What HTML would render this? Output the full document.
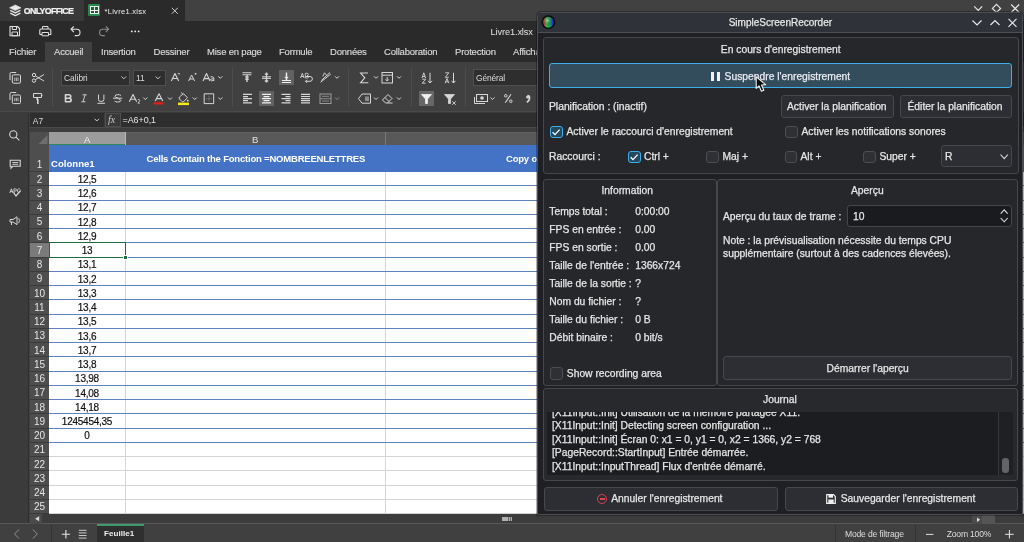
<!DOCTYPE html>
<html><head><meta charset="utf-8">
<style>
*{box-sizing:border-box;margin:0;padding:0}
html,body{width:1024px;height:542px;overflow:hidden}
body{will-change:transform}
body{position:relative;font-family:"Liberation Sans",sans-serif;background:#404040;color:#ddd}
.a{position:absolute}
.t{position:absolute;white-space:nowrap;line-height:1}
svg{position:absolute;overflow:visible}
/* OnlyOffice */
.mt{position:absolute;top:46.9px;font-size:9.5px;letter-spacing:-0.2px;-webkit-text-stroke:0.15px #d9d9d9;color:#d9d9d9;white-space:nowrap;line-height:1}
.row{position:absolute;left:30px;width:994px;height:14.25px}
.rh{position:absolute;left:30px;width:19px;background:#4b4b4b;color:#d8d8d8;font-size:9.5px;text-align:center;border-bottom:1px solid #3a3a3a}
.ca{position:absolute;left:49px;width:76px;text-align:center;font-size:9.4px;color:#000;line-height:14px}
.hl{position:absolute;left:49px;width:975px;height:1px;background:#8eaadb}
.gl{position:absolute;left:49px;width:975px;height:1px;background:#dadada}
/* SSR */
.s{position:absolute;white-space:nowrap;line-height:1;font-size:10.3px;color:#e6e6e6;margin-top:0.8px;-webkit-text-stroke:0.25px #e6e6e6}
.gb{position:absolute;border:1px solid #45474b;border-radius:3px;background:#26272b}
.btn{position:absolute;border:1px solid #45484d;border-radius:3px;background:#2c2e33}
.cb{position:absolute;width:12.5px;height:12.5px;border:1px solid #4c4e53;border-radius:3px;background:#2e3034}
.cbc{position:absolute;width:12.5px;height:12.5px;border:1px solid #3daee9;border-radius:3px;background:#25485c}
</style></head><body>

<!-- ============ ONLYOFFICE ============ -->
<div class="a" style="left:0;top:0;width:1024px;height:21px;background:#414141"></div>
<div class="a" style="left:0;top:0;width:84px;height:21px;background:#393939"></div>
<div class="a" style="left:84px;top:0;width:101px;height:21px;background:#2a2a2a"></div>
<div class="a" style="left:0;top:21px;width:1024px;height:41px;background:#2a2a2a"></div>
<div class="a" style="left:45px;top:42px;width:47px;height:20px;background:#404040"></div>
<div class="a" style="left:0;top:62px;width:1024px;height:49px;background:#404040"></div>
<div class="a" style="left:0;top:110.5px;width:1024px;height:2px;background:#3a3a3a;border-top:1px solid #4a4a4a"></div>

<!-- tab bar content -->
<div class="t" style="left:23.8px;top:6.5px;font-size:8.9px;letter-spacing:-0.7px;font-weight:bold;color:#f2f2f2;-webkit-text-stroke:0.2px #f2f2f2">ONLYOFFICE</div>
<div class="a" style="left:88px;top:4.4px;width:12px;height:11.4px;background:#248a4e;border-radius:1px"></div>
<div class="a" style="left:89.8px;top:6.2px;width:8.9px;height:7.8px;background:#f2f2f2"></div>
<div class="a" style="left:91px;top:7.4px;width:2.8px;height:2.2px;background:#1c5e38"></div><div class="a" style="left:94.8px;top:7.4px;width:2.8px;height:2.2px;background:#1c5e38"></div><div class="a" style="left:91px;top:10.6px;width:2.8px;height:2.2px;background:#1c5e38"></div><div class="a" style="left:94.8px;top:10.6px;width:2.8px;height:2.2px;background:#1c5e38"></div>
<div class="t" style="left:104.5px;top:7.6px;font-size:7.6px;letter-spacing:0.25px;color:#eee">*Livre1.xlsx</div>
<div class="t" style="left:490.5px;top:27.6px;font-size:9.2px;letter-spacing:-0.1px;color:#e0e0e0">Livre1.xlsx</div>

<!-- menu tabs -->
<div class="mt" style="left:9px">Fichier</div>
<div class="mt" style="left:54px">Accueil</div>
<div class="mt" style="left:101px">Insertion</div>
<div class="mt" style="left:153.5px">Dessiner</div>
<div class="mt" style="left:207px">Mise en page</div>
<div class="mt" style="left:279px">Formule</div>
<div class="mt" style="left:330px">Données</div>
<div class="mt" style="left:384px">Collaboration</div>
<div class="mt" style="left:455px">Protection</div>
<div class="mt" style="left:513px">Affichage</div>

<!-- toolbar controls -->
<div class="a" style="left:61px;top:70px;width:69px;height:16px;background:#2e2e2e;border:1px solid #4f4f4f"></div>
<div class="t" style="left:64px;top:74px;font-size:8.4px;color:#ddd">Calibri</div>
<div class="a" style="left:133px;top:70px;width:33px;height:16px;background:#2e2e2e;border:1px solid #4f4f4f"></div>
<div class="t" style="left:136px;top:74px;font-size:8.4px;color:#ddd">11</div>
<div class="a" style="left:473px;top:69px;width:70px;height:17px;background:#2e2e2e;border:1px solid #4f4f4f"></div>
<div class="t" style="left:476px;top:74.3px;font-size:8.4px;letter-spacing:-0.1px;color:#ddd">Général</div>
<div class="a" style="left:279px;top:70px;width:15px;height:15px;background:#626262"></div>
<div class="a" style="left:259px;top:91px;width:15px;height:15px;background:#626262"></div>
<div class="a" style="left:419px;top:90.5px;width:15px;height:15.5px;background:#676767"></div>
<div class="a" style="left:52px;top:67px;width:1px;height:40px;background:#4c4c4c"></div>
<div class="a" style="left:232px;top:67px;width:1px;height:40px;background:#4c4c4c"></div>
<div class="a" style="left:348px;top:67px;width:1px;height:40px;background:#4c4c4c"></div>
<div class="a" style="left:411px;top:67px;width:1px;height:40px;background:#4c4c4c"></div>
<div class="a" style="left:465px;top:67px;width:1px;height:40px;background:#4c4c4c"></div>

<!-- left sidebar -->
<div class="a" style="left:0;top:113px;width:29px;height:411px;background:#3b3b3b;border-right:1px solid #2f2f2f"></div>

<!-- formula bar -->
<div class="a" style="left:30px;top:112.5px;width:994px;height:19.5px;background:#3e3e3e"></div>
<div class="a" style="left:30px;top:126.5px;width:994px;height:1px;background:#4a4a4a"></div>
<div class="a" style="left:30px;top:113px;width:74px;height:14px;background:#2e2e2e"></div>
<div class="t" style="left:32.8px;top:116.9px;font-size:8.4px;color:#ddd">A7</div>
<div class="a" style="left:104.5px;top:113px;width:16px;height:14px;background:#393939;border:1px solid #4d4d4d"></div>
<div class="t" style="left:108px;top:115px;font-size:10px;font-family:'Liberation Serif';font-style:italic;color:#ccc">fx</div>
<div class="a" style="left:121px;top:113px;width:903px;height:14px;background:#2e2e2e"></div>
<div class="t" style="left:122.5px;top:116px;font-size:8.9px;color:#e6e6e6">=A6+0,1</div>

<!-- column headers -->
<div class="a" style="left:30px;top:131.5px;width:994px;height:13.5px;background:#595959;border-top:1px solid #626262"></div>
<div class="a" style="left:30px;top:132px;width:19px;height:13px;background:#4e4e4e"></div>
<svg style="left:30px;top:132px" width="19" height="13"><path d="M17.5 3 V12 H8.5 Z" fill="#6e6e6e"/></svg>
<div class="a" style="left:49px;top:132px;width:76px;height:13px;background:#9c9c9c;border-bottom:1px solid #2f8a52"></div>
<div class="t" style="left:84px;top:135px;font-size:9.5px;color:#f0f0f0">A</div>
<div class="a" style="left:125px;top:132px;width:1px;height:13px;background:#b8b8b8"></div>
<div class="t" style="left:252px;top:135px;font-size:9.5px;color:#e0e0e0">B</div>
<div class="a" style="left:384.5px;top:132px;width:1px;height:13px;background:#7a7a7a"></div>

<!-- grid -->
<div class="a" style="left:49px;top:145px;width:975px;height:368.5px;background:#fff"></div>
<div class="a" style="left:49px;top:145px;width:975px;height:26.5px;background:#4472c4"></div>
<div class="t" style="left:51px;top:159px;font-size:9.6px;font-weight:bold;color:#fff">Colonne1</div>
<div class="t" style="left:146.5px;top:154.2px;font-size:9.5px;letter-spacing:-0.2px;font-weight:bold;color:#fff">Cells Contain the Fonction =NOMBREENLETTRES</div>
<div class="t" style="left:506px;top:154.2px;font-size:9.5px;letter-spacing:-0.2px;font-weight:bold;color:#fff">Copy o</div>
<!--GRID-->
<div class="a" style="left:30px;top:145px;width:19px;height:368.5px;background:#4e4e4e"></div>
<div class="t" style="left:30px;top:159.8px;width:19px;text-align:center;font-size:10px;color:#e2e2e2">1</div>
<div class="a" style="left:30px;top:171px;width:19px;height:1px;background:#3a3a3a"></div>
<div class="a" style="left:124.5px;top:171.5px;width:1px;height:342px;background:#d4d4d4"></div>
<div class="a" style="left:384.5px;top:171.5px;width:1px;height:342px;background:#d4d4d4"></div>
<div class="t" style="left:30px;top:174.60px;width:19px;text-align:center;font-size:10px;color:#e6e6e6">2</div>
<div class="a" style="left:30px;top:185.25px;width:19px;height:1px;background:#3a3a3a"></div>
<div class="a" style="left:49px;top:185.25px;width:975px;height:1px;background:#5f82c0"></div>
<div class="t" style="left:49px;top:174.90px;width:76px;text-align:center;font-size:10px;letter-spacing:-0.25px;color:#111;-webkit-text-stroke:0.2px #111">12,5</div>
<div class="t" style="left:30px;top:188.85px;width:19px;text-align:center;font-size:10px;color:#e6e6e6">3</div>
<div class="a" style="left:30px;top:199.50px;width:19px;height:1px;background:#3a3a3a"></div>
<div class="a" style="left:49px;top:199.50px;width:975px;height:1px;background:#5f82c0"></div>
<div class="t" style="left:49px;top:189.15px;width:76px;text-align:center;font-size:10px;letter-spacing:-0.25px;color:#111;-webkit-text-stroke:0.2px #111">12,6</div>
<div class="t" style="left:30px;top:203.10px;width:19px;text-align:center;font-size:10px;color:#e6e6e6">4</div>
<div class="a" style="left:30px;top:213.75px;width:19px;height:1px;background:#3a3a3a"></div>
<div class="a" style="left:49px;top:213.75px;width:975px;height:1px;background:#5f82c0"></div>
<div class="t" style="left:49px;top:203.40px;width:76px;text-align:center;font-size:10px;letter-spacing:-0.25px;color:#111;-webkit-text-stroke:0.2px #111">12,7</div>
<div class="t" style="left:30px;top:217.35px;width:19px;text-align:center;font-size:10px;color:#e6e6e6">5</div>
<div class="a" style="left:30px;top:228.00px;width:19px;height:1px;background:#3a3a3a"></div>
<div class="a" style="left:49px;top:228.00px;width:975px;height:1px;background:#5f82c0"></div>
<div class="t" style="left:49px;top:217.65px;width:76px;text-align:center;font-size:10px;letter-spacing:-0.25px;color:#111;-webkit-text-stroke:0.2px #111">12,8</div>
<div class="t" style="left:30px;top:231.60px;width:19px;text-align:center;font-size:10px;color:#e6e6e6">6</div>
<div class="a" style="left:30px;top:242.25px;width:19px;height:1px;background:#3a3a3a"></div>
<div class="a" style="left:49px;top:242.25px;width:975px;height:1px;background:#5f82c0"></div>
<div class="t" style="left:49px;top:231.90px;width:76px;text-align:center;font-size:10px;letter-spacing:-0.25px;color:#111;-webkit-text-stroke:0.2px #111">12,9</div>
<div class="a" style="left:30px;top:242.75px;width:19px;height:14.25px;background:#7b7b7b"></div>
<div class="t" style="left:30px;top:245.85px;width:19px;text-align:center;font-size:10px;color:#e6e6e6">7</div>
<div class="a" style="left:30px;top:256.50px;width:19px;height:1px;background:#3a3a3a"></div>
<div class="a" style="left:49px;top:256.50px;width:975px;height:1px;background:#5f82c0"></div>
<div class="t" style="left:49px;top:246.15px;width:76px;text-align:center;font-size:10px;letter-spacing:-0.25px;color:#111;-webkit-text-stroke:0.2px #111">13</div>
<div class="t" style="left:30px;top:260.10px;width:19px;text-align:center;font-size:10px;color:#e6e6e6">8</div>
<div class="a" style="left:30px;top:270.75px;width:19px;height:1px;background:#3a3a3a"></div>
<div class="a" style="left:49px;top:270.75px;width:975px;height:1px;background:#5f82c0"></div>
<div class="t" style="left:49px;top:260.40px;width:76px;text-align:center;font-size:10px;letter-spacing:-0.25px;color:#111;-webkit-text-stroke:0.2px #111">13,1</div>
<div class="t" style="left:30px;top:274.35px;width:19px;text-align:center;font-size:10px;color:#e6e6e6">9</div>
<div class="a" style="left:30px;top:285.00px;width:19px;height:1px;background:#3a3a3a"></div>
<div class="a" style="left:49px;top:285.00px;width:975px;height:1px;background:#5f82c0"></div>
<div class="t" style="left:49px;top:274.65px;width:76px;text-align:center;font-size:10px;letter-spacing:-0.25px;color:#111;-webkit-text-stroke:0.2px #111">13,2</div>
<div class="t" style="left:30px;top:288.60px;width:19px;text-align:center;font-size:10px;color:#e6e6e6">10</div>
<div class="a" style="left:30px;top:299.25px;width:19px;height:1px;background:#3a3a3a"></div>
<div class="a" style="left:49px;top:299.25px;width:975px;height:1px;background:#5f82c0"></div>
<div class="t" style="left:49px;top:288.90px;width:76px;text-align:center;font-size:10px;letter-spacing:-0.25px;color:#111;-webkit-text-stroke:0.2px #111">13,3</div>
<div class="t" style="left:30px;top:302.85px;width:19px;text-align:center;font-size:10px;color:#e6e6e6">11</div>
<div class="a" style="left:30px;top:313.50px;width:19px;height:1px;background:#3a3a3a"></div>
<div class="a" style="left:49px;top:313.50px;width:975px;height:1px;background:#5f82c0"></div>
<div class="t" style="left:49px;top:303.15px;width:76px;text-align:center;font-size:10px;letter-spacing:-0.25px;color:#111;-webkit-text-stroke:0.2px #111">13,4</div>
<div class="t" style="left:30px;top:317.10px;width:19px;text-align:center;font-size:10px;color:#e6e6e6">12</div>
<div class="a" style="left:30px;top:327.75px;width:19px;height:1px;background:#3a3a3a"></div>
<div class="a" style="left:49px;top:327.75px;width:975px;height:1px;background:#5f82c0"></div>
<div class="t" style="left:49px;top:317.40px;width:76px;text-align:center;font-size:10px;letter-spacing:-0.25px;color:#111;-webkit-text-stroke:0.2px #111">13,5</div>
<div class="t" style="left:30px;top:331.35px;width:19px;text-align:center;font-size:10px;color:#e6e6e6">13</div>
<div class="a" style="left:30px;top:342.00px;width:19px;height:1px;background:#3a3a3a"></div>
<div class="a" style="left:49px;top:342.00px;width:975px;height:1px;background:#5f82c0"></div>
<div class="t" style="left:49px;top:331.65px;width:76px;text-align:center;font-size:10px;letter-spacing:-0.25px;color:#111;-webkit-text-stroke:0.2px #111">13,6</div>
<div class="t" style="left:30px;top:345.60px;width:19px;text-align:center;font-size:10px;color:#e6e6e6">14</div>
<div class="a" style="left:30px;top:356.25px;width:19px;height:1px;background:#3a3a3a"></div>
<div class="a" style="left:49px;top:356.25px;width:975px;height:1px;background:#5f82c0"></div>
<div class="t" style="left:49px;top:345.90px;width:76px;text-align:center;font-size:10px;letter-spacing:-0.25px;color:#111;-webkit-text-stroke:0.2px #111">13,7</div>
<div class="t" style="left:30px;top:359.85px;width:19px;text-align:center;font-size:10px;color:#e6e6e6">15</div>
<div class="a" style="left:30px;top:370.50px;width:19px;height:1px;background:#3a3a3a"></div>
<div class="a" style="left:49px;top:370.50px;width:975px;height:1px;background:#5f82c0"></div>
<div class="t" style="left:49px;top:360.15px;width:76px;text-align:center;font-size:10px;letter-spacing:-0.25px;color:#111;-webkit-text-stroke:0.2px #111">13,8</div>
<div class="t" style="left:30px;top:374.10px;width:19px;text-align:center;font-size:10px;color:#e6e6e6">16</div>
<div class="a" style="left:30px;top:384.75px;width:19px;height:1px;background:#3a3a3a"></div>
<div class="a" style="left:49px;top:384.75px;width:975px;height:1px;background:#5f82c0"></div>
<div class="t" style="left:49px;top:374.40px;width:76px;text-align:center;font-size:10px;letter-spacing:-0.25px;color:#111;-webkit-text-stroke:0.2px #111">13,98</div>
<div class="t" style="left:30px;top:388.35px;width:19px;text-align:center;font-size:10px;color:#e6e6e6">17</div>
<div class="a" style="left:30px;top:399.00px;width:19px;height:1px;background:#3a3a3a"></div>
<div class="a" style="left:49px;top:399.00px;width:975px;height:1px;background:#5f82c0"></div>
<div class="t" style="left:49px;top:388.65px;width:76px;text-align:center;font-size:10px;letter-spacing:-0.25px;color:#111;-webkit-text-stroke:0.2px #111">14,08</div>
<div class="t" style="left:30px;top:402.60px;width:19px;text-align:center;font-size:10px;color:#e6e6e6">18</div>
<div class="a" style="left:30px;top:413.25px;width:19px;height:1px;background:#3a3a3a"></div>
<div class="a" style="left:49px;top:413.25px;width:975px;height:1px;background:#5f82c0"></div>
<div class="t" style="left:49px;top:402.90px;width:76px;text-align:center;font-size:10px;letter-spacing:-0.25px;color:#111;-webkit-text-stroke:0.2px #111">14,18</div>
<div class="t" style="left:30px;top:416.85px;width:19px;text-align:center;font-size:10px;color:#e6e6e6">19</div>
<div class="a" style="left:30px;top:427.50px;width:19px;height:1px;background:#3a3a3a"></div>
<div class="a" style="left:49px;top:427.50px;width:975px;height:1px;background:#5f82c0"></div>
<div class="t" style="left:49px;top:417.15px;width:76px;text-align:center;font-size:10px;letter-spacing:-0.25px;color:#111;-webkit-text-stroke:0.2px #111">1245454,35</div>
<div class="t" style="left:30px;top:431.10px;width:19px;text-align:center;font-size:10px;color:#e6e6e6">20</div>
<div class="a" style="left:30px;top:441.75px;width:19px;height:1px;background:#3a3a3a"></div>
<div class="a" style="left:49px;top:441.75px;width:975px;height:1px;background:#5f82c0"></div>
<div class="t" style="left:49px;top:431.40px;width:76px;text-align:center;font-size:10px;letter-spacing:-0.25px;color:#111;-webkit-text-stroke:0.2px #111">0</div>
<div class="t" style="left:30px;top:445.35px;width:19px;text-align:center;font-size:10px;color:#e6e6e6">21</div>
<div class="a" style="left:30px;top:456.00px;width:19px;height:1px;background:#3a3a3a"></div>
<div class="a" style="left:49px;top:456.00px;width:975px;height:1px;background:#d4d4d4"></div>
<div class="t" style="left:30px;top:459.60px;width:19px;text-align:center;font-size:10px;color:#e6e6e6">22</div>
<div class="a" style="left:30px;top:470.25px;width:19px;height:1px;background:#3a3a3a"></div>
<div class="a" style="left:49px;top:470.25px;width:975px;height:1px;background:#d4d4d4"></div>
<div class="t" style="left:30px;top:473.85px;width:19px;text-align:center;font-size:10px;color:#e6e6e6">23</div>
<div class="a" style="left:30px;top:484.50px;width:19px;height:1px;background:#3a3a3a"></div>
<div class="a" style="left:49px;top:484.50px;width:975px;height:1px;background:#d4d4d4"></div>
<div class="t" style="left:30px;top:488.10px;width:19px;text-align:center;font-size:10px;color:#e6e6e6">24</div>
<div class="a" style="left:30px;top:498.75px;width:19px;height:1px;background:#3a3a3a"></div>
<div class="a" style="left:49px;top:498.75px;width:975px;height:1px;background:#d4d4d4"></div>
<div class="t" style="left:30px;top:502.35px;width:19px;text-align:center;font-size:10px;color:#e6e6e6">25</div>
<div class="a" style="left:30px;top:513.00px;width:19px;height:1px;background:#3a3a3a"></div>
<div class="a" style="left:49px;top:513.00px;width:975px;height:1px;background:#d4d4d4"></div>
<div class="a" style="left:48.5px;top:242px;width:77.5px;height:16px;border:1.7px solid #1f6b42"></div>
<div class="a" style="left:122.5px;top:254.5px;width:5.5px;height:5.5px;background:#1f6b42;border:1px solid #fff"></div>
<!--/GRID-->

<!-- scrollbar / status -->
<div class="a" style="left:30px;top:513.5px;width:994px;height:10.5px;background:#3c3c3c"></div>
<div class="a" style="left:0;top:523px;width:1024px;height:19px;background:#404040;border-top:1px solid #585858"></div>
<div class="a" style="left:501.6px;top:516.7px;width:10.6px;height:4px;background:repeating-linear-gradient(90deg,#b0b0b0 0,#b0b0b0 1.6px,#6a6a6a 1.6px,#6a6a6a 2.2px)"></div>
<div class="a" style="left:96.5px;top:524px;width:47px;height:18px;background:#2f2f2f;border-top:2px solid #3e9a6a"></div>
<div class="t" style="left:104px;top:530px;font-size:8.1px;font-weight:bold;color:#eee">Feuille1</div>
<div class="a" style="left:51px;top:525px;width:1px;height:17px;background:#333"></div>
<div class="a" style="left:30px;top:514px;width:12px;height:9.5px;background:#4b4b4b"></div>
<svg style="left:0;top:508px" width="100" height="34" viewBox="0 0 100 34">
 <path d="M39.2 8.2 V13.3 L35 10.75 Z" fill="#d8d8d8"/>
 <path d="M19 21.5 L14.5 26 L19 30.5 M32.8 21.5 L37.3 26 L32.8 30.5" stroke="#9a9a9a" stroke-width="0.9" fill="none"/>
 <path d="M61.8 26.2 H70 M65.9 22 V30.5" stroke="#e8e8e8" stroke-width="1.1" fill="none"/>
 <path d="M78.8 22.3 H86.5 M78.8 24.9 H86.5 M78.8 27.5 H86.5 M78.8 30.1 H86.5" stroke="#d8d8d8" stroke-width="0.9" fill="none"/>
</svg>
<div class="a" style="left:835px;top:525px;width:1px;height:17px;background:#333"></div>
<div class="a" style="left:915px;top:525px;width:1px;height:17px;background:#333"></div>
<div class="t" style="left:844.9px;top:529.7px;font-size:8.6px;letter-spacing:-0.17px;color:#ddd">Mode de filtrage</div>
<div class="t" style="left:946.7px;top:529.7px;font-size:8.6px;letter-spacing:-0.2px;color:#ddd">Zoom 100%</div>
<div class="a" style="left:971.8px;top:515px;width:10px;height:9px;background:#4a4a4a"></div>
<div class="a" style="left:982px;top:515px;width:13px;height:9px;background:#555"></div>
<svg style="left:900px;top:508px" width="124" height="34" viewBox="0 0 124 34">
 <path d="M77 9.5 V14 L80.2 11.75 Z" fill="#ddd"/>
 <path d="M26 26.4 H33.4" stroke="#e0e0e0" stroke-width="1" fill="none"/>
 <path d="M105.2 26.3 H113.6 M109.4 22 V30.5" stroke="#e8e8e8" stroke-width="1" fill="none"/>
</svg>
<!-- sidebar icons -->
<svg style="left:0;top:120px" width="30" height="120" viewBox="0 120 30 120">
 <g fill="none" stroke="#d8d8d8" stroke-width="1.1">
  <circle cx="13.3" cy="134.4" r="3.6"/>
  <path d="M15.9 137.1 L19.4 140.4"/>
  <path d="M10.2 160.2 H20.2 V166.3 H12.8 L11 168.2 V166.3 H10.2 Z"/>
  <path d="M12.3 162.5 H18.2 M12.3 164.3 H18.2" stroke-width="0.9"/>
  <path d="M9.8 193 L11.4 188.8 L13 193 M10.4 191.6 H12.4" stroke-width="0.9"/>
  <path d="M14 188.8 H15.3 Q16.5 188.8 16.5 190 Q16.5 191 15.3 191 H14 Z M14 191 V193" stroke-width="0.8"/>
  <path d="M20.3 189.5 Q19.6 188.7 18.7 188.8 Q17.2 189 17.4 191 Q17.6 192.8 19.5 192.5" stroke-width="0.8"/>
  <path d="M13.6 192.7 L16 196 L20.6 190.5" stroke-width="1.2"/>
  <path d="M10 219.5 H13 L17 216.8 V224.6 L13 222 H10 Z M11.5 222 V225" stroke-width="1"/>
  <path d="M18.7 218.2 Q20.3 220.7 18.7 223.2" stroke-width="0.9"/>
 </g>
</svg>

<!--OOICONS-->
<svg style="left:0;top:0" width="1024" height="542" viewBox="0 0 1024 542">
<g fill="none" stroke="#d6d6d6" stroke-width="1" stroke-linejoin="round">
 <!-- logo layers -->
 <path d="M15.3 5 L21 7.8 L15.3 10.6 L9.6 7.8 Z" fill="#e8e8e8" stroke="#e8e8e8" stroke-width="0.6"/>
 <path d="M10.2 10.4 L15.3 12.9 L20.4 10.4" stroke="#e8e8e8" stroke-width="1.3"/>
 <path d="M10.2 13.2 L15.3 15.7 L20.4 13.2" stroke="#e8e8e8" stroke-width="1.3"/>
 <!-- tab icon grid -->
 <!-- tab close -->
 <path d="M171.8 7.8 L177.8 13.8 M177.8 7.8 L171.8 13.8" stroke="#e0e0e0" stroke-width="0.9"/>
 <!-- save -->
 <path d="M10 26.5 H17.5 L19.5 28.5 V35.8 H10 Z" stroke="#e0e0e0" stroke-width="1.1"/>
 <path d="M12.3 26.5 V29.5 H16.5 V26.5" stroke="#e0e0e0"/>
 <path d="M12 32 H17.5 V35.8 H12 Z" stroke="#e0e0e0"/>
 <!-- print -->
 <path d="M42.5 29 V26.5 H48 V29" stroke="#e0e0e0"/>
 <path d="M39.8 34.5 V30.3 Q39.8 29 41 29 H49.5 Q50.8 29 50.8 30.3 V34.5 H48.5" stroke="#e0e0e0" stroke-width="1.1"/>
 <path d="M42 32.5 H48.5 V35.8 H42 Z M42 34.5 H39.8" stroke="#e0e0e0"/>
 <!-- undo -->
 <path d="M73.8 26.5 L71 29.2 L73.8 32 M71 29.2 H77 Q80 29.2 80 32.4 Q80 35.6 77 35.6 H74.8" stroke="#e0e0e0" stroke-width="1.1"/>
 <!-- redo -->
 <path d="M105.8 26.5 L108.6 29.2 L105.8 32 M108.6 29.2 H102.6 Q99.6 29.2 99.6 32.4 Q99.6 35.6 102.6 35.6 H104.8" stroke="#8a8a8a" stroke-width="1.1"/>
 <!-- more dots -->
 <circle cx="131.8" cy="31.4" r="0.9" fill="#eee" stroke="none"/><circle cx="135.2" cy="31.4" r="0.9" fill="#eee" stroke="none"/><circle cx="138.6" cy="31.4" r="0.9" fill="#eee" stroke="none"/>

 <!-- copy -->
 <path d="M10 80 V73.8 Q10 72.5 11.3 72.5 H16.2" />
 <rect x="12.3" y="74.8" width="8.2" height="8.4" rx="1.2"/>
 <path d="M14.8 77.5 V81 M16.4 77.5 V81 M18 77.5 V81" stroke-width="0.8"/>
 <!-- scissors -->
 <circle cx="34" cy="75" r="1.7"/><circle cx="34" cy="80.6" r="1.7"/>
 <path d="M35.5 76 L44 81 M35.5 79.6 L44 74.5"/>
 <!-- paste -->
 <path d="M10 100 V93.8 Q10 92.5 11.3 92.5 H16.2"/>
 <rect x="12.3" y="95" width="8.2" height="8.6" rx="1.2"/>
 <path d="M14.8 97.8 V101.2 M16.4 97.8 V101.2 M18 97.8 V101.2" stroke-width="0.8"/>
 <!-- format painter -->
 <path d="M33.5 93.5 H41.5 V97.5 H33.5 Z M41.5 95.5 H42.5" />
 <path d="M37.2 97.5 V99.5 H37.8 V104" stroke-width="1.6"/>
 <!-- font combos chevrons -->
 <path d="M121.5 76.5 L123.8 78.8 L126.1 76.5 M155.6 76.5 L157.9 78.8 L160.2 76.5" stroke="#d0d0d0"/>
 <!-- A increase / decrease / Aa -->
 <path d="M171.3 81 L175 73.5 L178.7 81 M172.6 78.5 H177.4" stroke-width="1.1"/>
 <path d="M177.8 73.8 H180" stroke-width="1"/>
 <path d="M188.6 81 L191.6 75 L194.6 81 M189.7 79 H193.5" stroke-width="1"/>
 <path d="M194.7 73.8 H196.5 M195.6 72.9 V74.7" stroke-width="0.9"/>
 <path d="M203 81 L206.5 73.5 L210 81 M204.2 78.6 H208.8" stroke-width="1.1"/>
 <path d="M210.5 76.8 Q213.8 76.3 213.8 78.3 V81 M213.8 78.8 Q210.5 78.5 210.5 80 Q210.8 81.3 213.8 80.4" stroke-width="1"/>
 <path d="M218.3 76.3 L220.3 78.3 L222.3 76.3" />
 <!-- B I U S -->
 <path d="M65.5 94.8 H68.6 Q70.8 94.8 70.8 96.6 Q70.8 98 69 98.2 Q71.2 98.4 71.2 100 Q71.2 101.8 68.8 101.8 H65.5 Z M65.5 98.2 H69" stroke-width="1.6"/>
 <path d="M82.5 94.8 H86.8 M81.3 101.8 H85.5 M85 94.8 L83 101.8" stroke-width="0.9"/>
 <path d="M98.5 94.6 V99.5 Q98.5 101.5 101.2 101.5 Q103.9 101.5 103.9 99.5 V94.6 M97.4 103.3 H105" stroke-width="1"/>
 <path d="M121 95.5 Q119.8 94.6 117.8 94.6 Q115 94.6 115 96.3 Q115 97.6 118 98 M113 98.2 H122.2 M118.5 99 Q120.8 99.4 120.8 100.5 Q120.8 102 117.8 102 Q115.6 102 114.6 101" stroke-width="1"/>
 <!-- A subscript -->
 <path d="M129.3 101.8 L133 94.5 L136.7 101.8 M130.6 99.3 H135.4" stroke-width="1.1"/>
 <path d="M137.8 99.5 Q139.8 99 139.8 100.8 L137.8 103.2 H140" stroke-width="0.8"/>
 <path d="M143.3 97.5 L145.3 99.5 L147.3 97.5"/>
 <!-- font color A -->
 <path d="M155.2 101 L159 93.8 L162.8 101 M156.5 98.6 H161.5" stroke-width="1.1"/>
 <path d="M168 97.5 L170 99.5 L172 97.5"/>
 <!-- fill -->
 <path d="M179.5 97 L183.3 93.5 L187.5 97.8 L183.8 101.4 Q182.8 102.3 181.8 101.4 L179.5 99 Q178.6 98 179.5 97 Z M181.2 92.6 L183.3 94.7" stroke-width="1"/>
 <circle cx="187.8" cy="100.6" r="0.9" fill="#e0e0e0" stroke="none"/>
 <path d="M192.8 97.5 L194.8 99.5 L196.8 97.5"/>
 <!-- borders -->
 <rect x="204.2" y="93.8" width="9.5" height="9.8" stroke-width="1"/>
 <path d="M206.2 98.7 H211.7 M209 95.8 V101.6" stroke="#8a8a8a" stroke-width="0.8" stroke-dasharray="1 0.6"/>
 <path d="M218.3 97.5 L220.3 99.5 L222.3 97.5"/>
 <path d="M94.6 118.8 L96.8 121 L99 118.8" stroke="#d0d0d0"/>
</g>
<!-- colored bars -->
<rect x="153.7" y="102.2" width="9.8" height="2.3" fill="#e0201c"/>
<rect x="178" y="102.6" width="11" height="2.5" fill="#f5e71a"/>
<g fill="none" stroke="#d6d6d6" stroke-width="1">
 <!-- align top -->
 <path d="M242.5 72.8 H251.5 M242.5 74.8 H251.5" stroke-width="1.1"/>
 <path d="M247 74.8 V82 M245.3 77 H248.7 M245.3 79.3 H248.7" stroke-width="1.4"/>
 <!-- align middle -->
 <path d="M262 76.8 H271 M262 78.4 H271" stroke-width="1"/>
 <path d="M266.5 72.6 V82.5 M264.8 74.2 H268.2 M264.8 81 H268.2" stroke-width="1.3"/>
 <!-- align bottom (active) -->
 <path d="M282 80.5 H291 M282 82.5 H291" stroke="#f0f0f0" stroke-width="1.1"/>
 <path d="M286.5 72.5 V80.5 M284.8 77.5 H288.2" stroke="#f0f0f0" stroke-width="1.4"/>
 <!-- wrap -->
 <path d="M300.5 78 L302.3 73.3 L304.1 78 M301.1 76.5 H303.5" stroke-width="0.9"/>
 <path d="M305.3 73.3 H307 Q308.4 73.3 308.4 74.6 Q308.4 75.6 307 75.7 Q308.6 75.8 308.6 76.9 Q308.6 78 307 78 H305.3 Z" stroke-width="0.8"/>
 <path d="M305.5 76.5 H310 Q312.4 76.5 312.4 78.9 Q312.4 81.3 310 81.3 H305.5 M307 79.8 L305.5 81.3 L307 82.8" stroke-width="1"/>
 <!-- orientation -->
 <path d="M321.3 80.5 L330 72.5 M320.5 82.3 L330.8 74" stroke-width="1"/>
 <path d="M322.8 76.5 L324.5 72.8 L326.8 75.5" stroke-width="0.9"/>
 <path d="M335 76.3 L337 78.3 L339 76.3"/>
 <!-- align left/center/right/justify -->
 <path d="M243 94.3 H252 M243 96.7 H248 M243 98.6 H252 M243 100.6 H248 M243 102.8 H252" stroke-width="1.2"/>
 <path d="M262 94.3 H271 M263.5 96.7 H269.5 M262 98.6 H271 M263.5 100.6 H269.5 M262 102.8 H271" stroke="#f0f0f0" stroke-width="1.2"/>
 <path d="M281.5 94.3 H290.5 M285.5 96.7 H290.5 M281.5 98.6 H290.5 M285.5 100.6 H290.5 M281.5 102.8 H290.5" stroke-width="1.2"/>
 <path d="M301 94.3 H310 M301 96.5 H310 M301 98.6 H310 M301 100.7 H310 M301 102.8 H310" stroke-width="1.2"/>
 <!-- merge -->
 <rect x="320" y="94" width="11" height="9.5" stroke="#9a9a9a" stroke-width="1"/>
 <path d="M320 98.7 H331 M322 96.3 H329 M322 101 H329" stroke="#9a9a9a" stroke-width="0.8"/>
 <path d="M335 97.5 L337 99.5 L339 97.5" stroke="#8a8a8a"/>
 <!-- sum -->
 <path d="M368 73 H360.6 L364.8 77.8 L360.6 82.8 H368.3" stroke-width="1.1"/>
 <path d="M374 76.3 L376 78.3 L378 76.3"/>
 <!-- insert cells -->
 <rect x="382" y="72.5" width="10.5" height="10.5" stroke-width="1"/>
 <path d="M382 75.2 H392.5 M387.2 77 V81 M385.6 79.4 L387.2 81 L388.8 79.4" stroke-width="1"/>
 <path d="M397 76.3 L399 78.3 L401 76.3"/>
 <!-- named range tag -->
 <path d="M362 94 H370.5 V103.2 H362 L358.5 98.6 Z" stroke-width="1"/>
 <path d="M366 96.5 V101 M368 96.5 V101" stroke-width="1"/>
 <path d="M374 97.5 L376 99.5 L378 97.5"/>
 <!-- eraser -->
 <path d="M382.5 100 L388 94.5 L392 98.5 L387.5 103 H385.5 Z M385 97.5 L389 101.5 M387.5 103 H392.5" stroke-width="1"/>
 <path d="M397 97.5 L399 99.5 L401 97.5"/>
 <!-- sort az -->
 <path d="M422 78 L423.8 72.8 L425.6 78 M422.6 76.5 H425" stroke-width="0.9"/>
 <path d="M422.2 79.2 H425.6 L422.2 83.2 H425.6" stroke-width="0.9"/>
 <path d="M430 72.8 V83 M428 80.8 L430 83 L432 80.8" stroke-width="1"/>
 <!-- sort za -->
 <path d="M445.3 72.8 H448.8 L445.3 77.3 H448.8" stroke-width="0.9"/>
 <path d="M445.2 83.2 L447 78.5 L448.8 83.2 M445.8 81.8 H448.2" stroke-width="0.9"/>
 <path d="M453.5 72.8 V83 M451.5 80.8 L453.5 83 L455.5 80.8" stroke-width="1"/>
 <!-- filter -->
 <path d="M421.5 94.5 H431.5 L427.5 99 V103.5 H425.5 V99 Z" fill="#f0f0f0" stroke="#f0f0f0" stroke-width="0.8"/>
 <path d="M444.5 94.5 H454.5 L450.5 99 V103.5 H448.5 V99 Z" fill="#d6d6d6" stroke="#d6d6d6" stroke-width="0.8"/>
 <path d="M452.3 101.3 L455.8 104.8 M455.8 101.3 L452.3 104.8" stroke-width="0.9"/>
 <!-- currency -->
 <path d="M474.5 97 V103.5 H485" stroke-width="1"/>
 <rect x="476.5" y="94.5" width="11" height="7" stroke-width="1"/>
 <circle cx="482" cy="98" r="1.8" fill="#d6d6d6" stroke="none"/>
 <path d="M490.5 97.5 L492.5 99.5 L494.5 97.5"/>
 <!-- percent -->
 <circle cx="505.8" cy="95.8" r="1.3" stroke-width="1"/><circle cx="510.8" cy="101.2" r="1.3" stroke-width="1"/>
 <path d="M511 94.3 L505.3 102.8" stroke-width="1.1"/>
 <path d="M527.5 95.5 Q529.6 95.5 529.6 97.6 Q529.6 100.8 526.8 102.3" stroke-width="1.6"/>
 <circle cx="527.6" cy="97" r="1.5" fill="#d6d6d6" stroke="none"/>
</g>
</svg>
<!--/OOICONS-->

<svg style="left:960px;top:0" width="64" height="16" viewBox="960 0 64 16">
 <path d="M974.2 6.3 L978.2 10.3 L982.2 6.3" stroke="#e8e8e8" stroke-width="1.2" fill="none"/>
 <path d="M996.5 4.3 L1000.6 8.4 L996.5 12.5 L992.4 8.4 Z" stroke="#e8e8e8" stroke-width="1.2" fill="none"/>
 <path d="M1011.2 4.5 L1019.2 12.5 M1019.2 4.5 L1011.2 12.5" stroke="#e8e8e8" stroke-width="1.2" fill="none"/>
</svg>
<!-- ============ SSR WINDOW ============ -->
<div class="a" style="left:536.8px;top:11.8px;width:486.7px;height:503.7px;background:#1f2023;border:1px solid #4b4d52;border-radius:4px 4px 0 0;box-shadow:0 0 0 1px rgba(0,0,0,0.3)"></div>
<div class="a" style="left:537.8px;top:12.8px;width:484.7px;height:20.7px;background:#2f3238;border-radius:3px 3px 0 0;border-bottom:1px solid #4d4f54"></div>
<div class="s" style="left:728.7px;top:17.5px;font-size:10px">SimpleScreenRecorder</div>


<!-- window controls -->
<svg style="left:970px;top:17px" width="60" height="12" viewBox="0 0 60 12">
 <path d="M2.5 3.5 L7 8 L11.5 3.5" stroke="#e8e8e8" stroke-width="1.2" fill="none"/>
 <path d="M20.5 8 L25 3.5 L29.5 8" stroke="#e8e8e8" stroke-width="1.2" fill="none"/>
 <path d="M38.5 1.8 L46.5 9.8 M46.5 1.8 L38.5 9.8" stroke="#e8e8e8" stroke-width="1.2" fill="none"/>
</svg>
<!-- app icon -->
<svg style="left:541px;top:15px" width="15" height="15" viewBox="0 0 15 15">
 <defs><linearGradient id="gg" x1="0" y1="0" x2="1" y2="0"><stop offset="0" stop-color="#8a2a20"/><stop offset="0.18" stop-color="#c5503a"/><stop offset="0.32" stop-color="#3fb860"/><stop offset="0.55" stop-color="#17a34e"/><stop offset="0.72" stop-color="#1a8a7a"/><stop offset="0.85" stop-color="#2538c8"/><stop offset="1" stop-color="#1a2490"/></linearGradient>
 <radialGradient id="gh" cx="0.4" cy="0.35" r="0.5"><stop offset="0" stop-color="#b8ffc0" stop-opacity="0.7"/><stop offset="1" stop-color="#000" stop-opacity="0"/></radialGradient></defs>
 <circle cx="7.4" cy="7.2" r="6.9" fill="#0a0a0c"/>
 <circle cx="7.4" cy="7.2" r="5.5" fill="url(#gg)"/>
 <circle cx="7.4" cy="7.2" r="5.5" fill="url(#gh)"/>
</svg>

<!-- group 1 -->
<div class="gb" style="left:542.5px;top:37px;width:476px;height:136.5px"></div>
<div class="s" style="left:720.8px;top:44.5px">En cours d'enregistrement</div>
<div class="a" style="left:549px;top:63px;width:463px;height:25px;background:#334d5c;border:1px solid #3daee9;border-radius:3px"></div>
<div class="a" style="left:710.5px;top:71.5px;width:3.5px;height:9px;background:#f2f2f2"></div>
<div class="a" style="left:716.5px;top:71.5px;width:3.5px;height:9px;background:#f2f2f2"></div>
<div class="s" style="left:724.6px;top:71px;color:#eef">Suspendre l'enregistrement</div>

<div class="s" style="left:549px;top:101px">Planification : (inactif)</div>
<div class="btn" style="left:781px;top:94.5px;width:112.5px;height:23px"></div>
<div class="s" style="left:787px;top:101px">Activer la planification</div>
<div class="btn" style="left:899.5px;top:94.5px;width:112.5px;height:23px"></div>
<div class="s" style="left:907.5px;top:101px">Éditer la planification</div>

<div class="cbc" style="left:550px;top:125.5px"></div>
<svg style="left:550px;top:125.5px" width="12" height="12"><path d="M2.6 6.2 L5 8.6 L9.6 3.6" stroke="#fff" stroke-width="1.3" fill="none"/></svg>
<div class="s" style="left:566.5px;top:126.5px">Activer le raccourci d'enregistrement</div>
<div class="cb" style="left:785px;top:125.5px"></div>
<div class="s" style="left:801.5px;top:126.5px">Activer les notifications sonores</div>

<div class="s" style="left:549px;top:151.5px">Raccourci :</div>
<div class="cbc" style="left:628px;top:150.5px"></div>
<svg style="left:628px;top:150.5px" width="12" height="12"><path d="M2.6 6.2 L5 8.6 L9.6 3.6" stroke="#fff" stroke-width="1.3" fill="none"/></svg>
<div class="s" style="left:644px;top:151.5px">Ctrl +</div>
<div class="cb" style="left:706px;top:150.5px"></div>
<div class="s" style="left:722.5px;top:151.5px">Maj +</div>
<div class="cb" style="left:784.5px;top:150.5px"></div>
<div class="s" style="left:800.5px;top:151.5px">Alt +</div>
<div class="cb" style="left:863px;top:150.5px"></div>
<div class="s" style="left:879.5px;top:151.5px">Super +</div>
<div class="btn" style="left:940.5px;top:144.5px;width:71.5px;height:22.5px"></div>
<div class="s" style="left:945px;top:151.5px">R</div>
<svg style="left:999.5px;top:153.8px" width="10" height="6"><path d="M0.5 0.5 L4.25 4.6 L8 0.5" stroke="#ddd" stroke-width="1.1" fill="none"/></svg>

<!-- info group -->
<div class="gb" style="left:543px;top:178.5px;width:174px;height:207px"></div>
<div class="s" style="left:601.5px;top:185px">Information</div>
<div class="s" style="left:549.3px;top:206px">Temps total :</div><div class="s" style="left:635.2px;top:206px">0:00:00</div>
<div class="s" style="left:549.3px;top:224px">FPS en entrée :</div><div class="s" style="left:635.2px;top:224px">0.00</div>
<div class="s" style="left:549.3px;top:242px">FPS en sortie :</div><div class="s" style="left:635.2px;top:242px">0.00</div>
<div class="s" style="left:549.3px;top:260.3px">Taille de l'entrée :</div><div class="s" style="left:635.2px;top:260.3px">1366x724</div>
<div class="s" style="left:549.3px;top:278px">Taille de la sortie :</div><div class="s" style="left:635.2px;top:278px">?</div>
<div class="s" style="left:549.3px;top:295.8px">Nom du fichier :</div><div class="s" style="left:635.2px;top:295.8px">?</div>
<div class="s" style="left:549.3px;top:314px">Taille du fichier :</div><div class="s" style="left:635.2px;top:314px">0 B</div>
<div class="s" style="left:549.3px;top:332px">Débit binaire :</div><div class="s" style="left:635.2px;top:332px">0 bit/s</div>
<div class="cb" style="left:550px;top:367px"></div>
<div class="s" style="left:566.8px;top:368px">Show recording area</div>

<!-- apercu group -->
<div class="gb" style="left:716.8px;top:178.5px;width:301.7px;height:207px"></div>
<div class="s" style="left:851px;top:185px">Aperçu</div>
<div class="s" style="left:723px;top:211.3px">Aperçu du taux de trame :</div>
<div class="a" style="left:846.5px;top:204.5px;width:165.5px;height:22.5px;background:#1a1b1e;border:1px solid #45474b;border-radius:3px"></div>
<div class="s" style="left:853px;top:211px">10</div>
<svg style="left:999.5px;top:208px" width="10" height="16"><path d="M0.7 5.6 L4.2 1.8 L7.7 5.6 M0.7 10 L4.2 13.8 L7.7 10" stroke="#ddd" stroke-width="1.1" fill="none"/></svg>
<div class="s" style="left:723px;top:235px">Note : la prévisualisation nécessite du temps CPU</div>
<div class="s" style="left:723px;top:248px">supplémentaire (surtout à des cadences élevées).</div>
<div class="btn" style="left:723px;top:356px;width:289px;height:24px"></div>
<div class="s" style="left:826.6px;top:363px">Démarrer l'aperçu</div>

<!-- journal group -->
<div class="gb" style="left:543px;top:387.5px;width:475px;height:93px;background:#28292d"></div>
<div class="s" style="left:763px;top:394px">Journal</div>
<div class="a" style="left:547px;top:412px;width:466px;height:63px;background:#1c1d20;overflow:hidden">
 <div class="s" style="left:5px;top:-4.6px">[X11Input::Init] Utilisation de la mémoire partagée X11.</div>
 <div class="s" style="left:5px;top:8.4px">[X11Input::Init] Detecting screen configuration ...</div>
 <div class="s" style="left:5px;top:21.9px">[X11Input::Init] Écran 0: x1 = 0, y1 = 0, x2 = 1366, y2 = 768</div>
 <div class="s" style="left:5px;top:35.4px">[PageRecord::StartInput] Entrée démarrée.</div>
 <div class="s" style="left:5px;top:48.9px">[X11Input::InputThread] Flux d'entrée démarré.</div>
</div>
<div class="a" style="left:997.5px;top:412px;width:15px;height:63px;background:#1f2023;border-left:1px solid #34363a"></div>
<div class="a" style="left:1002px;top:458px;width:6.5px;height:15px;background:#626468;border-radius:3.2px"></div>

<!-- bottom buttons -->
<div class="btn" style="left:543.5px;top:487px;width:234px;height:23.5px"></div>
<div class="a" style="left:597px;top:493.8px;width:10px;height:10px;border:1.3px solid #da4453;border-radius:50%"></div>
<div class="a" style="left:599.5px;top:498px;width:5px;height:1.6px;background:#da4453"></div>
<div class="s" style="left:611.2px;top:493.5px">Annuler l'enregistrement</div>
<div class="btn" style="left:784.5px;top:487px;width:233.5px;height:23.5px"></div>
<svg style="left:826px;top:493.5px" width="10" height="10"><path d="M0.7 0.7 H7.5 L9.3 2.5 V9.3 H0.7 Z" stroke="#eee" stroke-width="1.2" fill="none"/><rect x="2.5" y="0.7" width="4.5" height="3" fill="#eee"/><rect x="2.3" y="5.5" width="5.4" height="3.8" fill="#eee"/></svg>
<div class="s" style="left:840.7px;top:493.5px">Sauvegarder l'enregistrement</div>

<!-- cursor -->
<svg style="left:750px;top:70px" width="24" height="26" viewBox="750 70 24 26"><path d="M756.2 76.8 L756.2 88.4 L759 85.8 L761.4 91.2 L763.8 90.2 L761.5 85 L765.6 84.6 Z" fill="#0a0a0a" stroke="#f2f2f2" stroke-width="1.1" stroke-linejoin="round"/></svg>

</body></html>
